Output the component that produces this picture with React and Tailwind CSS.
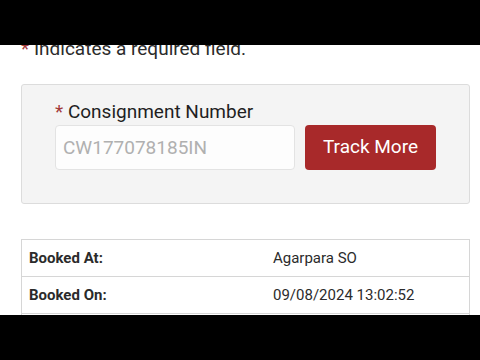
export default function App() {
  return (
    <div className="w-[480px] h-[360px] bg-black flex flex-col overflow-hidden">
      <div className="h-[45px] shrink-0 bg-black" />
      <div className="h-[270px] shrink-0 bg-white overflow-hidden font-['Roboto',sans-serif] text-[#2b2b2b]">
        <div className="-mt-[8px] pl-[21px] pr-[10px]">
          <p className="h-[24px] leading-[24px] text-[19px]">
            <span className="text-[#a33a3a]">*</span> Indicates a required field.
          </p>

          <div className="mt-[23px] h-[120px] rounded-[3px] border border-[#dcdcdc] bg-[#f4f4f4] pt-[15px] pl-[33px]">
            <label className="block h-[24px] leading-[24px] text-[19px] text-[#1f1f1f]">
              <span className="text-[#a33a3a]">*</span> Consignment Number
            </label>
            <div className="mt-[1px] flex gap-[10px]">
              <input
                className="h-[45px] w-[240px] rounded-[4px] border border-[#e3e3e3] bg-[#fdfdfd] pl-[7px] text-[19px] outline-none placeholder:text-[#b0b0b0]"
                placeholder="CW177078185IN"
              />
              <button className="h-[45px] w-[131px] rounded-[4px] bg-[#a8292a] text-[19px] text-white">
                Track More
              </button>
            </div>
          </div>

          <div className="mt-[35px] border-x border-[#d6d6d6] text-[15px]">
            <div className="grid h-[37px] grid-cols-[243px_1fr] items-center border-t border-[#d6d6d6]">
              <span className="pl-[7px] font-bold">Booked At:</span>
              <span className="pl-[8px]">Agarpara SO</span>
            </div>
            <div className="grid h-[37px] grid-cols-[243px_1fr] items-center border-t border-[#d6d6d6]">
              <span className="pl-[7px] font-bold">Booked On:</span>
              <span className="pl-[8px]">09/08/2024 13:02:52</span>
            </div>
            <div className="h-[37px] border-t border-[#d6d6d6]" />
          </div>
        </div>
      </div>
      <div className="flex-1 bg-black" />
    </div>
  );
}
